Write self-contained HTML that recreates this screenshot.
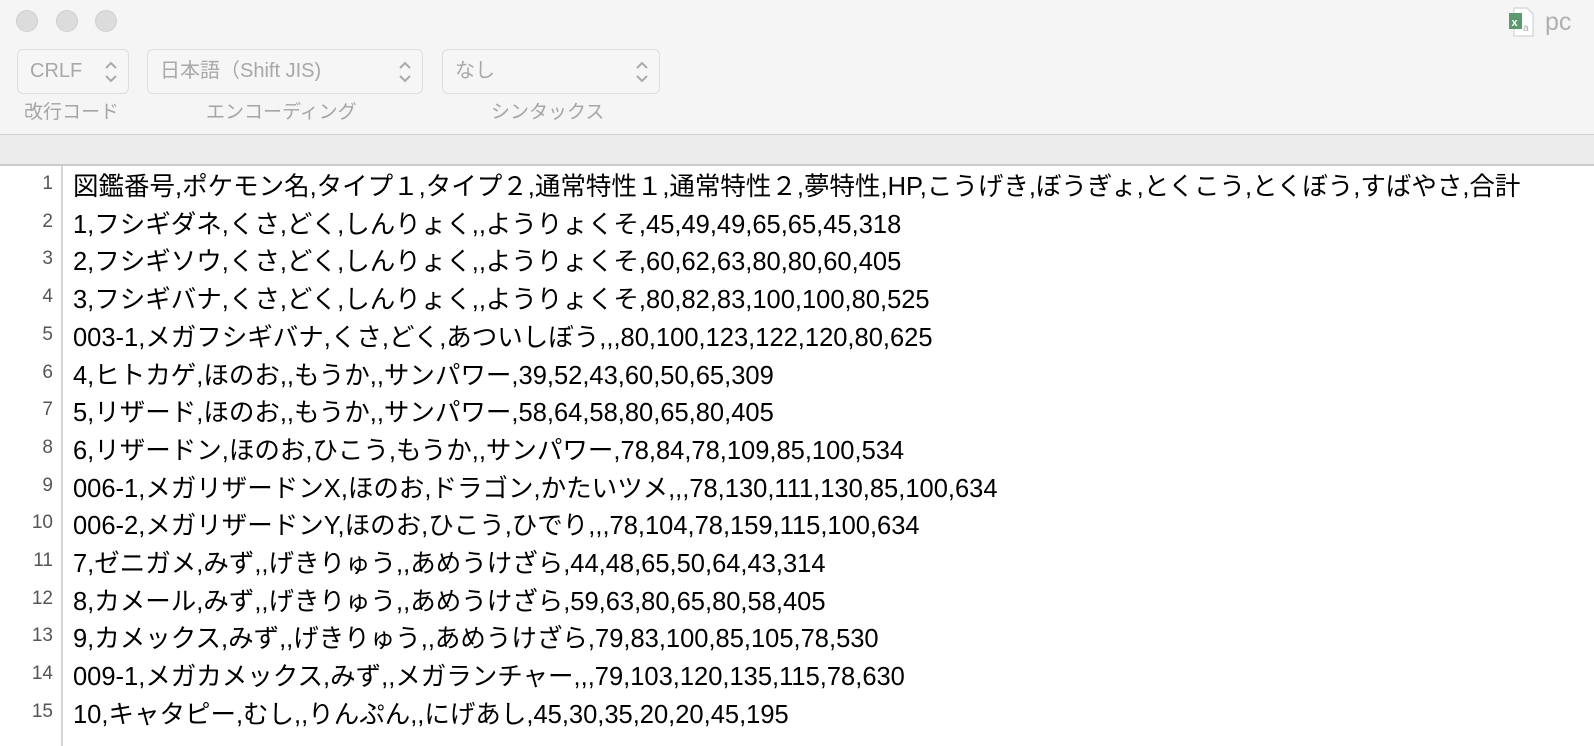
<!DOCTYPE html>
<html><head><meta charset="utf-8"><style>
body{margin:0;width:1594px;height:746px;overflow:hidden;background:#fff;font-family:"Liberation Sans","Noto Sans CJK JP",sans-serif;position:relative}
.tb{position:absolute;left:0;top:0;width:1594px;height:134px;background:#f5f5f5;border-bottom:1px solid #d2d2d2}
.dot{position:absolute;top:10px;width:22px;height:22px;border-radius:50%;background:#dcdcdc;border:1px solid #d0d0d0;box-sizing:border-box}
.sel{position:absolute;top:49px;height:45px;border:1px solid #dedede;border-radius:6px;background:#f6f6f6;box-sizing:border-box;color:#a8a8a8;font-size:20px;line-height:43px;padding-left:12px}
.sel svg{position:absolute;right:10px;top:9px}
.lab{position:absolute;top:97px;font-size:19px;color:#a5a5a5}
.bar{position:absolute;left:0;top:135px;width:1594px;height:29px;background:#ececec;border-bottom:2px solid #cbcbcb}
.gut{position:absolute;left:0;top:166px;width:61px;height:580px;border-right:2px solid #d5d5d5;background:#fff}
.ln{position:absolute;left:0;width:53px;text-align:right;font-size:19px;color:#555}
.tx{position:absolute;left:73px;font-size:25.5px;color:#000;white-space:nowrap}
</style></head><body>
<div class="tb">
<div class="dot" style="left:16px"></div><div class="dot" style="left:56px"></div><div class="dot" style="left:95px"></div>
<div class="sel" style="left:17px;width:112px">CRLF<svg width="14" height="26" viewBox="0 0 14 26"><path d="M2 9l5-5 5 5M2 17l5 5 5-5" fill="none" stroke="#aaa" stroke-width="2"/></svg></div>
<div class="sel" style="left:147px;width:276px">日本語（Shift JIS)<svg width="14" height="26" viewBox="0 0 14 26"><path d="M2 9l5-5 5 5M2 17l5 5 5-5" fill="none" stroke="#aaa" stroke-width="2"/></svg></div>
<div class="sel" style="left:442px;width:218px">なし<svg width="14" height="26" viewBox="0 0 14 26"><path d="M2 9l5-5 5 5M2 17l5 5 5-5" fill="none" stroke="#aaa" stroke-width="2"/></svg></div>
<div class="lab" style="left:24px">改行コード</div>
<div class="lab" style="left:206px">エンコーディング</div>
<div class="lab" style="left:491px">シンタックス</div>
<svg style="position:absolute;left:1508px;top:7px" width="28" height="30" viewBox="0 0 28 30"><path d="M6 1h13l6 6v22H6z" fill="#fff" stroke="#ccc"/><rect x="1" y="6" width="13" height="16" fill="#5b9a6e"/><text x="3.5" y="19" font-size="11" fill="#fff" font-family="Liberation Sans" font-weight="bold">x</text><text x="15" y="24" font-size="10" fill="#aaa" font-family="Liberation Sans">a</text></svg>
<div style="position:absolute;left:1545px;top:8px;font-size:25px;color:#b0b0b0">pc</div>
</div>
<div class="bar"></div>
<div class="gut"></div>
<div id="c"></div>
<script>
var L=["図鑑番号,ポケモン名,タイプ１,タイプ２,通常特性１,通常特性２,夢特性,HP,こうげき,ぼうぎょ,とくこう,とくぼう,すばやさ,合計",
"1,フシギダネ,くさ,どく,しんりょく,,ようりょくそ,45,49,49,65,65,45,318",
"2,フシギソウ,くさ,どく,しんりょく,,ようりょくそ,60,62,63,80,80,60,405",
"3,フシギバナ,くさ,どく,しんりょく,,ようりょくそ,80,82,83,100,100,80,525",
"003-1,メガフシギバナ,くさ,どく,あついしぼう,,,80,100,123,122,120,80,625",
"4,ヒトカゲ,ほのお,,もうか,,サンパワー,39,52,43,60,50,65,309",
"5,リザード,ほのお,,もうか,,サンパワー,58,64,58,80,65,80,405",
"6,リザードン,ほのお,ひこう,もうか,,サンパワー,78,84,78,109,85,100,534",
"006-1,メガリザードンX,ほのお,ドラゴン,かたいツメ,,,78,130,111,130,85,100,634",
"006-2,メガリザードンY,ほのお,ひこう,ひでり,,,78,104,78,159,115,100,634",
"7,ゼニガメ,みず,,げきりゅう,,あめうけざら,44,48,65,50,64,43,314",
"8,カメール,みず,,げきりゅう,,あめうけざら,59,63,80,65,80,58,405",
"9,カメックス,みず,,げきりゅう,,あめうけざら,79,83,100,85,105,78,530",
"009-1,メガカメックス,みず,,メガランチャー,,,79,103,120,135,115,78,630",
"10,キャタピー,むし,,りんぷん,,にげあし,45,30,35,20,20,45,195"];
var h="";for(var i=0;i<L.length;i++){var y=166+i*37.7;h+='<div class="ln" style="top:'+(y+7)+'px">'+(i+1)+'</div><div class="tx" style="top:'+y+'px">'+L[i]+'</div>';}
document.getElementById("c").innerHTML=h;
</script>
</body></html>
